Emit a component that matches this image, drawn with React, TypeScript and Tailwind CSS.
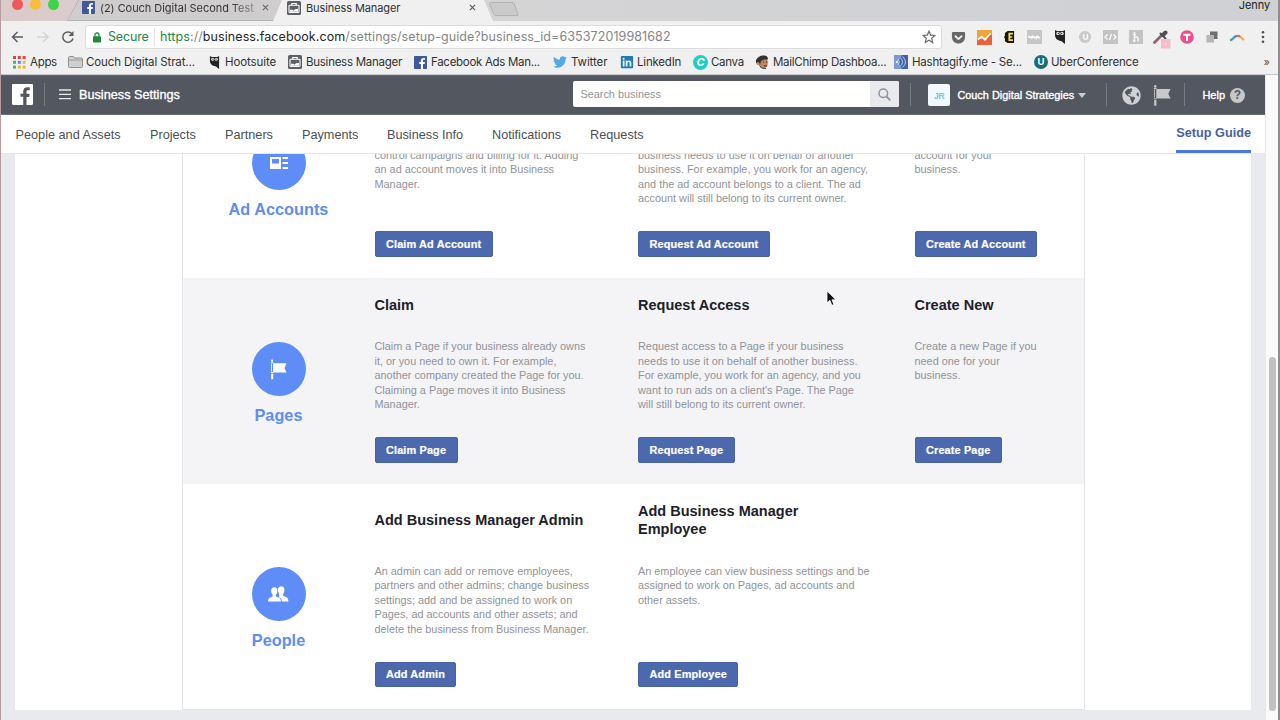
import type { ReactNode } from "react";
import { FaGlobeAmericas, FaTwitter, FaLinkedin, FaGetPocket } from "react-icons/fa";

const FB_PATH =
  "M22.676 0H1.324C.593 0 0 .593 0 1.324v21.352C0 23.408.593 24 1.324 24h11.494v-9.294H9.689v-3.621h3.129V8.41c0-3.099 1.894-4.785 4.659-4.785 1.325 0 2.464.097 2.796.141v3.24h-1.921c-1.5 0-1.792.721-1.792 1.771v2.311h3.584l-.465 3.63H16.56V24h6.115c.733 0 1.325-.592 1.325-1.324V1.324C24 .593 23.408 0 22.676 0";

function FacebookMark({ className }: { className: string }) {
  return (
    <svg viewBox="0 0 24 24" className={className} fill="currentColor">
      <path d={FB_PATH} />
    </svg>
  );
}

function FacebookFavicon() {
  return (
    <span className="flex size-[13px] shrink-0 bg-white">
      <FacebookMark className="size-[13px] text-[#3f579b]" />
    </span>
  );
}

function BriefcaseIcon() {
  return (
    <svg viewBox="0 0 14 14" className="size-[14px] shrink-0">
      <rect width="14" height="14" rx="1.5" fill="#5c5f66" />
      <path d="M4.800 4.300V2.500h4.400v1.800" fill="none" stroke="#fff" strokeWidth="1.200" />
      <rect x="2" y="4.300" width="10" height="7.200" rx=".8" fill="none" stroke="#fff" strokeWidth="1.100" />
      <path d="M3 8.800h2.500l1 1 1.500-1.600L11 7.800v2.900H3z" fill="#fff" />
    </svg>
  );
}

function OwlIcon({ className }: { className: string }) {
  return (
    <svg viewBox="0 0 12 14" className={className}>
      <path d="M1 0l2 1h6l2-1v14c-1.500-1-2.500-2.300-4-3C3.500 10.500 1 8.500 1 5z" fill="#222426" />
      <circle cx="4" cy="3.400" r="1.700" fill="#eee" />
      <circle cx="8" cy="3.400" r="1.700" fill="#eee" />
      <circle cx="4.300" cy="3.400" r=".7" fill="#222" />
      <circle cx="7.700" cy="3.400" r=".7" fill="#222" />
    </svg>
  );
}

function FlagIcon({ className }: { className: string }) {
  return (
    <svg viewBox="0 0 18 21" className={className}>
      <circle cx="2.200" cy="1.200" r="1.200" fill="currentColor" />
      <path d="M.8 2.800h2.700v1.100H.8zM1 4.500h.9v8H1zM.8 13.200h2.700v1.100H.8zM1.200 15h2.200v5.800H1.200z" fill="currentColor" />
      <path d="M3.300 4h14.200l-2.200 4.800 2.200 4.800H3.300z" fill="currentColor" />
    </svg>
  );
}

function AppsIcon() {
  const colors = ["#e0453a", "#e0453a", "#e0453a", "#4db36b", "#4c8bf0", "#e9b83e", "#4db36b", "#e9b83e", "#e9b83e"];
  return (
    <svg viewBox="0 0 13 13" className="size-[13px] shrink-0">
      {colors.map((color, i) => (
        <rect key={i} x={(i % 3) * 4.8} y={Math.floor(i / 3) * 4.8} width="3" height="3" fill={color} />
      ))}
    </svg>
  );
}

function Bookmark({ icon, label, width, text }: { icon: ReactNode; label: string; width: string; text: string }) {
  return (
    <div className={`flex shrink-0 items-center ${width}`}>
      {icon}
      <span className={`whitespace-nowrap ${text}`}>{label}</span>
    </div>
  );
}

function TabStrip() {
  return (
    <div className="flex h-[21px] bg-gradient-to-r from-[#dcc9c9] via-[#d6d5d5] via-20% to-[#cfd1d5]">
      <div className="flex w-[66px] shrink-0 gap-[6px] pl-[11px]">
        <span className="-mt-[1px] size-[11px] rounded-full bg-[#ee5a5c]" />
        <span className="-mt-[1px] ml-px size-[11px] rounded-full bg-[#f6bd3f]" />
        <span className="-mt-[1px] ml-px size-[11px] rounded-full bg-[#40d24c]" />
      </div>
      <div className="flex h-[21px] w-[214px] shrink-0 bg-[#b5b2b2] [clip-path:polygon(11px_0,100%_0,100%_100%,0_100%)]">
        <div className="flex h-[20px] w-[214px] items-start bg-[#cfcdcd] pl-[15px] pt-[1px] [clip-path:polygon(12px_0,100%_0,100%_100%,1px_100%)]">
          <FacebookFavicon />
          <span className="ml-[5px] w-[162px] shrink-0 bg-gradient-to-r from-[#303032] from-80% to-[#303032]/20 bg-clip-text text-[11px] leading-[14px] tracking-[-0.05px] whitespace-nowrap text-transparent">
            (2) Couch Digital Second Test
          </span>
          <svg viewBox="0 0 8 8" className="mt-[3px] size-[7px] shrink-0" stroke="#666" strokeWidth="1.200">
            <path d="M1 1l6 6M7 1L1 7" />
          </svg>
        </div>
      </div>
      <div className="-ml-[8px] flex h-[21px] w-[221px] shrink-0 bg-[#f0f0f0] pl-[14px] pt-[1px] [clip-path:polygon(9px_0,211px_0,220px_100%,0_100%)]">
        <BriefcaseIcon />
        <span className="ml-[5px] w-[163px] text-[11px] leading-[14px] tracking-[-0.1px] text-[#303032]">Business Manager</span>
        <svg viewBox="0 0 8 8" className="mt-[3px] size-[7px] shrink-0" stroke="#555" strokeWidth="1.200">
          <path d="M1 1l6 6M7 1L1 7" />
        </svg>
      </div>
      <svg viewBox="0 0 32 16" className="-ml-[6px] mt-[1px] h-[16px] w-[32px]">
        <path d="M2.500 1.500H24q1.500 0 2 1l4 10.500q.5 1.500-1 1.500H8q-1.500 0-2-1.200L1.500 3Q1 1.500 2.500 1.500z" fill="#cbcaca" stroke="#b3b1b1" />
      </svg>
      <span className="-mt-[2px] ml-auto pr-[8px] text-[11px] leading-[15px] tracking-[-0.100px] text-[#222]">Jenny</span>
    </div>
  );
}

function Extensions() {
  const icons: ReactNode[] = [
    <FaGetPocket className="size-[15px] text-[#68686b]" />,
    <svg viewBox="0 0 15 15" className="size-[15px]">
      <path d="M0 0h15v15H0z" fill="#f2a43c" />
      <path d="M0 10l4-2.500 4 1.500L15 4v11H0z" fill="#e8613c" />
      <path d="M1 9.500l3.500-2.500 3.500 2.500L13.500 3.500" stroke="#fff" strokeWidth="1.600" fill="none" />
      <circle cx="4.500" cy="7" r="1.300" fill="#fff" />
      <circle cx="8" cy="9.300" r="1.300" fill="#fff" />
    </svg>,
    <svg viewBox="0 0 12 13" className="h-[12px] w-[11px]">
      <path d="M4 0h7v13H4l-3-2V8L0 6.500 1 5V2z" fill="#18170f" />
      <path d="M9.800 2.800H5.800v7.200h4M5.500 6.500h3.500" stroke="#f3e545" strokeWidth="1.900" fill="none" />
    </svg>,
    <svg viewBox="0 0 15 14" className="h-[14px] w-[15px]">
      <path d="M0 0h15v14H0z" fill="#c6c6c6" />
      <path d="M2 8V6.500l1.500 1L5 6.500V8l1.500-1.500L8 8l1.500-1.500v1.700L11 6.500 12 8l1-1" stroke="#fff" strokeWidth="1.300" fill="none" />
    </svg>,
    <OwlIcon className="h-[14px] w-[12px]" />,
    <span className="flex size-[12px] items-center justify-center rounded-full bg-[#c9c9c9] text-[8px] font-bold text-white">U</span>,
    <svg viewBox="0 0 15 14" className="h-[14px] w-[15px]">
      <path d="M0 0h15v14H0z" fill="#c3c3c3" />
      <path d="M4.500 4.500L2 7l2.500 2.500M10.500 4.500L13 7l-2.500 2.500M8.500 4l-2 6" stroke="#fff" strokeWidth="1.300" fill="none" />
    </svg>,
    <svg viewBox="0 0 14 14" className="size-[14px]">
      <path d="M0 0h14v14H0z" fill="#c3c3c3" />
      <path d="M5.500 2v9M4 4.500h3M5.500 7.500q3-1.500 3.500.5V11.500M4 11h2.500" stroke="#fff" strokeWidth="1.300" fill="none" />
    </svg>,
    <svg viewBox="0 0 18 19" className="mt-[4px] ml-[2px] h-[19px] w-[18px]">
      <path d="M1.500 12.500L8 6" stroke="#8f6070" strokeWidth="2.800" strokeLinecap="round" />
      <path d="M7.500 3.500l5 5" stroke="#4f4f52" strokeWidth="2" strokeLinecap="round" />
      <path d="M10 5l2.500-2.500" stroke="#4f4f52" strokeWidth="4" strokeLinecap="round" />
      <path d="M8 9h9.500v9.500H8z" fill="#f8bccb" />
      <path d="M12 13.500h1.300v1.300H12z" fill="#fff" />
    </svg>,
    <svg viewBox="0 0 14 14" className="size-[14px]">
      <circle cx="7" cy="7" r="6.800" fill="#e8508f" />
      <path d="M3.500 4.700h7M7 4.700V11" stroke="#fff" strokeWidth="2" />
    </svg>,
    <svg viewBox="0 0 12 12" className="size-[12px]">
      <path d="M4 .5h7.500V8H4z" fill="#6e6e70" />
      <path d="M.5 4H8v7.500H.5z" fill="#b5b5b6" />
    </svg>,
    <svg viewBox="0 0 16 8" className="mt-[1px] h-[8px] w-[16px]" fill="none" strokeWidth="2.200">
      <path d="M1 6.500q2-.8 3.500-2.500" stroke="#3aa39c" />
      <path d="M4.500 4Q6 2 8 2" stroke="#3f83d8" />
      <path d="M8 2q2-.3 3.500 1" stroke="#e8694a" />
      <path d="M11.500 3Q13 4.500 15 6" stroke="#edb04d" />
    </svg>,
    <svg viewBox="0 0 4 14" className="h-[14px] w-[4px]" fill="#505053">
      <circle cx="2" cy="2.200" r="1.300" />
      <circle cx="2" cy="7" r="1.300" />
      <circle cx="2" cy="11.800" r="1.300" />
    </svg>,
  ];
  return (
    <div className="ml-[4px] flex h-[24px]">
      {icons.map((icon, i) => (
        <span key={i} className="flex w-[25.35px] shrink-0 items-center justify-center">
          {icon}
        </span>
      ))}
    </div>
  );
}

function AddressBar() {
  return (
    <div className="flex h-[32px] items-center bg-[#f0f0f0]">
      <svg viewBox="0 0 66 14" className="ml-[10px] h-[14px] w-[66px] shrink-0" fill="none" strokeWidth="1.500">
        <path d="M12 7H1.500M6.500 2L1.500 7l5 5" stroke="#5b5b5e" />
        <path d="M26 7h11M32 2l5 5-5 5" stroke="#d3d3d3" />
        <path d="M61.300 4.200A5.200 5.200 0 1 0 62 8.500" stroke="#5b5b5e" />
        <path d="M62.500 1v5h-5z" fill="#5b5b5e" />
      </svg>
      <div className="ml-[8px] flex h-[24px] w-[857px] shrink-0 items-center rounded-[3px] border border-[#dcdcdc] bg-white">
        <svg viewBox="0 0 8 11" className="ml-[7px] h-[11px] w-[8px]">
          <rect y="4.200" width="8" height="6.300" rx=".8" fill="#20883f" />
          <path d="M2 4.500V3a2 2 0 0 1 4 0v1.500" stroke="#20883f" strokeWidth="1.300" fill="none" />
        </svg>
        <span className="ml-[7px] w-[46px] pt-px text-[12.5px] tracking-[-0.15px] whitespace-nowrap text-[#20883f]">Secure</span>
        <span className="h-[18px] w-px bg-[#e4e4e4]" />
        <span className="ml-[5px] pt-px text-[12.5px] tracking-[0.085px] whitespace-nowrap text-[#858585]">
          <span className="text-[#20883f]">https</span>://<span className="text-[#252527]">business.facebook.com</span>
          /settings/setup-guide?business_id=635372019981682
        </span>
        <svg viewBox="0 0 14 14" className="mr-[5px] ml-auto size-[14px]" fill="none" stroke="#6b6b6e" strokeWidth="1.200">
          <path d="M7 1.200l1.700 3.900 4.200.4-3.200 2.800 1 4.200L7 10.300l-3.700 2.200 1-4.200L1.100 5.500l4.200-.4z" />
        </svg>
      </div>
      <Extensions />
    </div>
  );
}

function BookmarksBar() {
  return (
    <div className="flex h-[22px] items-center border-b border-[#c4c5c8] bg-[#f0f0f0] pb-[3px] pl-[12px] text-[11.5px] leading-[16px] text-[#303032]">
      <Bookmark icon={<AppsIcon />} label="Apps" width="w-[55px]" text="ml-[4px] tracking-[-0.3px]" />
      <Bookmark
        icon={
          <svg viewBox="0 0 15 12" className="h-[12px] w-[15px] shrink-0">
            <path d="M.5 1.500q0-1 1-1h4l1 1.500h7q1 0 1 1v7.500q0 1-1 1h-12q-1 0-1-1z" fill="#cfcfcf" stroke="#929292" />
            <path d="M1 4h13" stroke="#9c9c9c" />
          </svg>
        }
        label="Couch Digital Strat..."
        width="w-[141px]"
        text="ml-[3px] tracking-[-0.12px]"
      />
      <Bookmark icon={<OwlIcon className="h-[13px] w-[11px]" />} label="Hootsuite" width="w-[79px]" text="ml-[5px] tracking-[-0.1px]" />
      <Bookmark icon={<BriefcaseIcon />} label="Business Manager" width="w-[126px]" text="ml-[4px] tracking-[-0.26px]" />
      <Bookmark icon={<FacebookFavicon />} label="Facebook Ads Man..." width="w-[139px]" text="ml-[4px] tracking-[-0.3px]" />
      <Bookmark icon={<FaTwitter className="size-[14px] shrink-0 text-[#55a8e3]" />} label="Twitter" width="w-[67px]" text="ml-[4px] tracking-[-0.1px]" />
      <Bookmark icon={<FaLinkedin className="size-[14px] shrink-0 text-[#1c7ab5]" />} label="LinkedIn" width="w-[73px]" text="ml-[3px] tracking-[-0.2px]" />
      <Bookmark
        icon={<span className="flex size-[15px] shrink-0 items-center justify-center rounded-full bg-[#1fcfc6] text-[11px] font-bold text-white italic">C</span>}
        label="Canva"
        width="w-[62px]"
        text="ml-[3px] tracking-[-0.3px]"
      />
      <Bookmark
        icon={
          <svg viewBox="0 0 14 14" className="size-[14px] shrink-0">
            <path d="M5 3l6-1 2 5-.5 4L9 13.500 5.500 12 3 8z" fill="#b98866" />
            <path d="M1 5q3-5 8-4.500 4 0 4 4L9 4.500 6 6l-1 4-1-2-2 .500q-1.500-1-1-3.500z" fill="#33302f" />
            <path d="M4.500 10.500l2 2.500 4.500.5" stroke="#43342d" fill="none" />
            <path d="M8 7h1M11 7h1M9 11h3" stroke="#3d2c25" />
            <circle cx="3" cy="8.500" r="1.500" fill="#b98866" />
          </svg>
        }
        label="MailChimp Dashboa..."
        width="w-[139px]"
        text="ml-[4px] tracking-[-0.28px]"
      />
      <Bookmark
        icon={
          <svg viewBox="0 0 14 14" className="size-[14px] shrink-0">
            <path d="M0 0h14v14H0z" fill="#3f62a8" />
            <path d="M0 0h8L4 7l4 7H0z" fill="#7b9bd0" />
            <path d="M4 4q3 3 0 6M6 2.500q5 4.500 0 9M8.500 1.500q6 5.500 0 11" stroke="#dce7f8" strokeWidth=".8" fill="none" />
            <circle cx="3" cy="7" r="1.300" fill="#dce7f8" />
          </svg>
        }
        label="Hashtagify.me - Se..."
        width="w-[140px]"
        text="ml-[4px] tracking-[-0.2px]"
      />
      <Bookmark
        icon={<span className="flex size-[14px] shrink-0 items-center justify-center rounded-full bg-[#1b6c78] text-[9.5px] font-bold text-white">U</span>}
        label="UberConference"
        width="w-[120px]"
        text="ml-[3px] tracking-[-0.2px]"
      />
      <span className="mr-[8px] ml-auto text-[11px] text-[#555]">»</span>
    </div>
  );
}

function HeaderRule({ className }: { className: string }) {
  return <span className={`h-[23px] w-px shrink-0 bg-[#777b82] ${className}`} />;
}

function BusinessHeader() {
  return (
    <header className="flex h-[40px] items-center border-y border-t-[#62666d] border-b-[#6c6f74] bg-[#53575f] pb-[2px] text-white">
      <FacebookMark className="ml-[11px] size-[21px] shrink-0" />
      <HeaderRule className="ml-[11px]" />
      <svg viewBox="0 0 12 11" className="mt-px ml-[14px] h-[11px] w-[12px] shrink-0" stroke="#e8e9eb" strokeWidth="1.300">
        <path d="M0 1h12M0 5.300h12M0 9.600h12" />
      </svg>
      <span className="ml-[8px] pt-[3px] text-[12.7px] whitespace-nowrap [-webkit-text-stroke:0.35px_white]">Business Settings</span>
      <div className="ml-auto flex h-[26px] w-[326px] shrink-0 overflow-hidden rounded-[2px] bg-white">
        <span className="flex flex-1 items-center pt-px pl-[7px] text-[10.9px] text-[#90949c]">Search business</span>
        <span className="flex w-[29px] items-center justify-center bg-[#e9eaed]">
          <svg viewBox="0 0 13 13" className="size-[13px]" fill="none" stroke="#8f9297" strokeWidth="1.500">
            <circle cx="5.300" cy="5.300" r="4.300" />
            <path d="M8.400 8.400L12.300 12.300" strokeWidth="1.900" />
          </svg>
        </span>
      </div>
      <HeaderRule className="mt-px ml-[11px]" />
      <span className="mt-[2px] ml-[17px] flex size-[22px] shrink-0 items-center justify-center rounded-[2px] bg-[#f2f9fe] pt-[2px] text-[8.5px] text-[#54c0ea] [-webkit-text-stroke:0.2px_#54c0ea]">
        JR
      </span>
      <span className="ml-[7px] w-[117px] pt-[2px] text-[10.9px] whitespace-nowrap [-webkit-text-stroke:0.35px_white]">Couch Digital Strategies</span>
      <svg viewBox="0 0 8 5" className="mt-[2px] ml-[4px] h-[5px] w-[8px] shrink-0" fill="#c9cbce">
        <path d="M0 0h8L4 5z" />
      </svg>
      <HeaderRule className="mt-px ml-[20px]" />
      <FaGlobeAmericas className="mt-[2px] ml-[15px] size-[19px] shrink-0 text-[#cfd1d4]" />
      <FlagIcon className="mt-[2px] ml-[12px] h-[21px] w-[18px] shrink-0 text-[#c6c8cb]" />
      <HeaderRule className="mt-px ml-[13px]" />
      <span className="ml-[17px] pt-[2px] text-[11px] [-webkit-text-stroke:0.35px_white]">Help</span>
      <span className="mt-[2px] mr-[20px] ml-[5px] flex size-[15px] shrink-0 items-center justify-center rounded-full bg-[#c6c8cb] text-[12px] leading-none font-bold text-[#53575f]">
        ?
      </span>
    </header>
  );
}

function SubNav() {
  return (
    <nav className="flex h-[39px] items-center border-b border-[#e5e6e8] bg-white pt-[2px] pr-[14px] pl-[14.5px] text-[12.7px] whitespace-nowrap text-[#4b4f56]">
      <span className="w-[134.500px] pt-px">People and Assets</span>
      <span className="w-[75px] pt-px">Projects</span>
      <span className="w-[77px] pt-px">Partners</span>
      <span className="w-[85px] pt-px">Payments</span>
      <span className="w-[105px] pt-px">Business Info</span>
      <span className="w-[98px] pt-px">Notifications</span>
      <span className="pt-px">Requests</span>
      <span className="ml-auto flex h-[36px] items-center self-start border-b-[3px] border-[#4a78dc] font-bold text-[#4a629b]">Setup Guide</span>
    </nav>
  );
}

interface Action {
  title: string;
  lines: string[];
  button: string;
}

function ActionColumn({ title, lines, button, tall }: Action & { tall: boolean }) {
  return (
    <div className="flex flex-col items-start">
      <h3 className={`flex items-center text-[14.5px] leading-[18px] font-bold whitespace-pre text-[#1d2129] ${tall ? "h-[36px]" : "h-[18px]"}`}>
        {title}
      </h3>
      <p className="mt-[25.5px] h-[72.5px] text-[10.88px] leading-[14.5px] whitespace-pre text-[#909398]">{lines.join("\n")}</p>
      <button className="mt-[25.5px] flex h-[25.5px] items-center rounded-[2px] border border-[#4762a5] bg-[#4d69ae] px-[10.500px] text-[10.9px] font-bold tracking-[0.14px] whitespace-nowrap text-white [-webkit-text-stroke:0.2px_white]">
        {button}
      </button>
    </div>
  );
}

function Section({ icon, label, actions, tall = false, shaded = false }: { icon: ReactNode; label: string; actions: Action[]; tall?: boolean; shaded?: boolean }) {
  return (
    <section
      className={`grid shrink-0 grid-cols-[192px_263.5px_276.5px_169px] ${tall ? "h-[225px] pt-[18px]" : "h-[206px] pt-[17.5px]"} ${shaded ? "bg-[#f4f4f7]" : "bg-white"}`}
    >
      <div className={`flex flex-col items-center ${tall ? "pt-[65px]" : "pt-[46.5px]"}`}>
        <span className="flex size-[54px] items-center justify-center rounded-full bg-[#5f8df7] text-white">{icon}</span>
        <span className="mt-[8.500px] text-[16.3px] leading-[20px] font-bold text-[#5f8df0]">{label}</span>
      </div>
      {actions.map((action) => (
        <ActionColumn key={action.button} {...action} tall={tall} />
      ))}
    </section>
  );
}

const adAccountActions: Action[] = [
  {
    title: "",
    lines: ["", "control campaigns and billing for it. Adding", "an ad account moves it into Business", "Manager."],
    button: "Claim Ad Account",
  },
  {
    title: "",
    lines: [
      "",
      "business needs to use it on behalf of another",
      "business. For example, you work for an agency,",
      "and the ad account belongs to a client. The ad",
      "account will still belong to its current owner.",
    ],
    button: "Request Ad Account",
  },
  { title: "", lines: ["", "account for your", "business."], button: "Create Ad Account" },
];

const pageActions: Action[] = [
  {
    title: "Claim",
    lines: [
      "Claim a Page if your business already owns",
      "it, or you need to own it. For example,",
      "another company created the Page for you.",
      "Claiming a Page moves it into Business",
      "Manager.",
    ],
    button: "Claim Page",
  },
  {
    title: "Request Access",
    lines: [
      "Request access to a Page if your business",
      "needs to use it on behalf of another business.",
      "For example, you work for an agency, and you",
      "want to run ads on a client's Page. The Page",
      "will still belong to its current owner.",
    ],
    button: "Request Page",
  },
  { title: "Create New", lines: ["Create a new Page if you", "need one for your", "business."], button: "Create Page" },
];

const peopleActions: Action[] = [
  {
    title: "Add Business Manager Admin",
    lines: [
      "An admin can add or remove employees,",
      "partners and other admins; change business",
      "settings; add and be assigned to work on",
      "Pages, ad accounts and other assets; and",
      "delete the business from Business Manager.",
    ],
    button: "Add Admin",
  },
  {
    title: "Add Business Manager\nEmployee",
    lines: ["An employee can view business settings and be", "assigned to work on Pages, ad accounts and", "other assets."],
    button: "Add Employee",
  },
];

function SetupGuide() {
  return (
    <main className="flex h-[566px] flex-col bg-[#e9eaed] px-[14px]">
      <div className="flex h-[556px] justify-center bg-white">
        <div className="flex h-[556px] w-[903px] flex-col justify-end overflow-hidden border-x border-b border-[#e4e5e8]">
          <Section
            icon={
              <svg viewBox="0 0 18 12" className="h-[12px] w-[18px]">
                <path d="M0 0h11v12H0zM2 2v4.500h7V2z" fill="currentColor" fillRule="evenodd" />
                <path d="M12.500 1H18M12.500 6H18M12.500 11H18" stroke="currentColor" strokeWidth="1.800" />
              </svg>
            }
            label="Ad Accounts"
            actions={adAccountActions}
          />
          <Section icon={<FlagIcon className="h-[21px] w-[17px]" />} label="Pages" actions={pageActions} shaded />
          <Section
            icon={
              <svg viewBox="0 0 21 16" className="h-[16px] w-[21px]" fill="currentColor">
                <path d="M11 7.500Q10 6 10 3.800 10.200.3 13.300.3t3.200 3.500q0 3-1.400 4.500v1.200q.3.600 2.300 1.200 3 .8 3 4.800h-6.500q0-3.200-2.900-4.200.4-2.500 0-3.800z" />
                <path d="M0 15.500q0-3.400 3-4.200 1.400-.4 1.700-1V9Q3.200 7.800 3.200 4.900 3.200 1.300 6.300 1.300t3.100 3.600q0 2.900-1.500 4.100v1.300q.3.600 1.900 1 3.200.8 3.200 4.200z" />
              </svg>
            }
            label="People"
            actions={peopleActions}
            tall
          />
        </div>
      </div>
    </main>
  );
}

export default function App() {
  return (
    <div className="relative flex h-[720px] w-[1280px] overflow-hidden border-r-2 border-l border-r-[#8d8d90] border-l-[#b59c9e] bg-[#f0f0f0] font-['Inter','Liberation_Sans',sans-serif]">
      <div className="flex w-[1277px] shrink-0 flex-col">
        <TabStrip />
        <AddressBar />
        <BookmarksBar />
        <div className="flex h-[645px]">
          <div className="w-[1264px] shrink-0 font-['Liberation_Sans',Arial,sans-serif]">
            <BusinessHeader />
            <SubNav />
            <SetupGuide />
          </div>
          <div className="flex flex-1 justify-center border-l border-[#e8e8e8] bg-[#fafafa] pt-[282px]">
            <span className="h-[354px] w-[7px] rounded-full bg-[#c1c1c1]" />
          </div>
        </div>
      </div>
      <svg viewBox="0 0 11 17" className="absolute top-[290px] left-[824.5px] h-[17px] w-[11px]">
        <path d="M1 1v12l2.900-2.700L5.900 15.300l2-.8L6 9.800h4z" fill="#111" stroke="#fff" strokeWidth=".8" />
      </svg>
    </div>
  );
}
